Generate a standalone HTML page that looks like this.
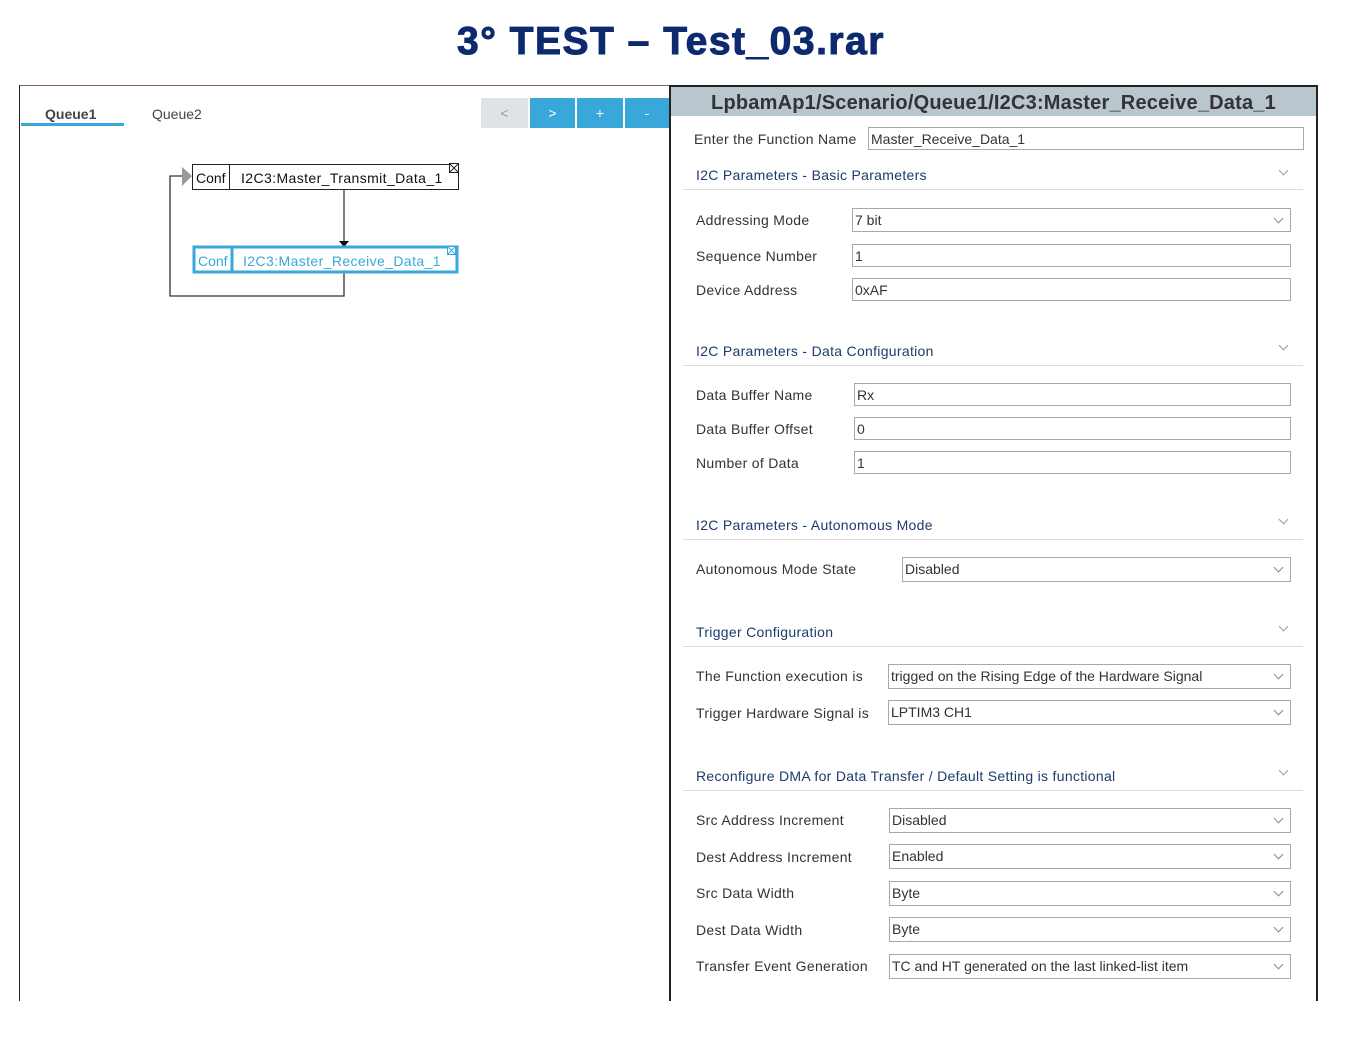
<!DOCTYPE html>
<html><head><meta charset="utf-8"><style>
body{margin:0;width:1349px;height:1039px;background:#fff;position:relative;overflow:hidden;font-family:"Liberation Sans",sans-serif;}
.a{position:absolute;}
.t{position:absolute;font-size:14px;color:#333;line-height:16px;letter-spacing:0.3px;white-space:nowrap}
.h{position:absolute;font-size:14px;color:#1d3b6b;line-height:16px;letter-spacing:0.3px;white-space:nowrap}
.f{position:absolute;border:1px solid #a8a8a8;background:#fff;font-size:14px;color:#333;line-height:22px;padding-left:2px;box-sizing:border-box;white-space:nowrap}
.s::after{content:"";position:absolute;right:8px;top:6px;width:6px;height:6px;border-right:1px solid #888;border-bottom:1px solid #888;transform:rotate(45deg)}
.c{position:absolute;width:6px;height:6px;border-right:1px solid #999;border-bottom:1px solid #999;transform:rotate(45deg)}
.l{position:absolute;left:683px;width:620px;height:1px;background:#ddd}
</style></head><body>
<div class="a" style="left:0;top:18px;width:1342px;text-align:center;font-size:39px;font-weight:bold;color:#0d2a6e;line-height:48px;letter-spacing:1.5px;-webkit-text-stroke:1px #0d2a6e">3° TEST – Test_03.rar</div>

<!-- left panel -->
<div class="a" style="left:19px;top:85px;width:650px;height:1px;background:#8a5a7a"></div>
<div class="a" style="left:19px;top:85px;width:1px;height:916px;background:#222"></div>
<div class="a" style="left:45px;top:106px;font-size:14px;font-weight:bold;color:#444">Queue1</div>
<div class="a" style="left:21px;top:123px;width:103px;height:3px;background:#3ba5d8"></div>
<div class="a" style="left:152px;top:106px;font-size:14px;color:#444">Queue2</div>
<div class="a" style="left:481px;top:98px;width:47px;height:30px;background:#dfe3e6;color:#999;text-align:center;line-height:30px;font-size:14px">&lt;</div>
<div class="a" style="left:530px;top:98px;width:45px;height:30px;background:#3aa7da;color:#fff;text-align:center;line-height:30px;font-size:14px">&gt;</div>
<div class="a" style="left:577px;top:98px;width:46px;height:30px;background:#3aa7da;color:#fff;text-align:center;line-height:30px;font-size:14px">+</div>
<div class="a" style="left:625px;top:98px;width:44px;height:30px;background:#3aa7da;color:#fff;text-align:center;line-height:30px;font-size:14px">-</div>

<svg class="a" style="left:0;top:0" width="670" height="320">
<polyline points="344,190 344,242" stroke="#000" fill="none"/>
<polygon points="339,241 349,241 344,247" fill="#000"/>
<polyline points="344,273 344,296 170,296 170,176 182,176" stroke="#333" fill="none" stroke-width="1.3"/>
<polygon points="182,167 192,176 182,186" fill="#999"/>
<rect x="192.5" y="164.5" width="266" height="25" fill="#fff" stroke="#222"/>
<line x1="229.5" y1="164" x2="229.5" y2="190" stroke="#222"/>
<rect x="194" y="247" width="263" height="25" fill="#fff" stroke="#3aa7da" stroke-width="3"/>
<line x1="232" y1="247" x2="232" y2="272" stroke="#3aa7da" stroke-width="3"/>
<rect x="449.5" y="163.5" width="9" height="9" fill="#fff" stroke="#222"/>
<path d="M450 164l8 8M458 164l-8 8" stroke="#222"/>
<rect x="447.5" y="246.5" width="8" height="8" fill="#fff" stroke="#3aa7da"/>
<path d="M448 247l7 7M455 247l-7 7" stroke="#3aa7da"/>
</svg>
<div class="a" style="left:196px;top:170px;font-size:14px;color:#111">Conf</div>
<div class="a" style="left:241px;top:170px;font-size:14px;color:#111;letter-spacing:0.4px">I2C3:Master_Transmit_Data_1</div>
<div class="a" style="left:198px;top:253px;font-size:14px;color:#3aa7da">Conf</div>
<div class="a" style="left:243px;top:253px;font-size:14px;color:#3aa7da;letter-spacing:0.4px">I2C3:Master_Receive_Data_1</div>

<!-- right panel -->
<div class="a" style="left:669px;top:85px;width:649px;height:916px;border:2px solid #222;border-bottom:none;box-sizing:border-box"></div>
<div class="a" style="left:671px;top:87px;width:645px;height:29px;background:#b9c6ce;text-align:center;font-size:20px;font-weight:bold;color:#333;line-height:32px;letter-spacing:0.2px">LpbamAp1/Scenario/Queue1/I2C3:Master_Receive_Data_1</div>

<div class="t" style="left:694px;top:131px">Enter the Function Name</div>
<div class="f" style="left:868px;top:127px;width:436px;height:23px">Master_Receive_Data_1</div>

<div class="h" style="left:696px;top:167px">I2C Parameters - Basic Parameters</div><div class="c" style="left:1280px;top:167px"></div><div class="l" style="top:189px"></div>
<div class="t" style="left:696px;top:212px">Addressing Mode</div><div class="f s" style="left:852px;top:208px;width:439px;height:24px">7 bit</div>
<div class="t" style="left:696px;top:248px">Sequence Number</div><div class="f" style="left:852px;top:244px;width:439px;height:23px">1</div>
<div class="t" style="left:696px;top:282px">Device Address</div><div class="f" style="left:852px;top:278px;width:439px;height:23px">0xAF</div>

<div class="h" style="left:696px;top:343px">I2C Parameters - Data Configuration</div><div class="c" style="left:1280px;top:342px"></div><div class="l" style="top:365px"></div>
<div class="t" style="left:696px;top:387px">Data Buffer Name</div><div class="f" style="left:854px;top:383px;width:437px;height:23px">Rx</div>
<div class="t" style="left:696px;top:421px">Data Buffer Offset</div><div class="f" style="left:854px;top:417px;width:437px;height:23px">0</div>
<div class="t" style="left:696px;top:455px">Number of Data</div><div class="f" style="left:854px;top:451px;width:437px;height:23px">1</div>

<div class="h" style="left:696px;top:517px">I2C Parameters - Autonomous Mode</div><div class="c" style="left:1280px;top:516px"></div><div class="l" style="top:539px"></div>
<div class="t" style="left:696px;top:561px">Autonomous Mode State</div><div class="f s" style="left:902px;top:557px;width:389px;height:25px">Disabled</div>

<div class="h" style="left:696px;top:624px">Trigger Configuration</div><div class="c" style="left:1280px;top:623px"></div><div class="l" style="top:646px"></div>
<div class="t" style="left:696px;top:668px">The Function execution is</div><div class="f s" style="left:888px;top:664px;width:403px;height:25px">trigged on the Rising Edge of the Hardware Signal</div>
<div class="t" style="left:696px;top:705px">Trigger Hardware Signal is</div><div class="f s" style="left:888px;top:700px;width:403px;height:25px">LPTIM3 CH1</div>

<div class="h" style="left:696px;top:768px">Reconfigure DMA for Data Transfer / Default Setting is functional</div><div class="c" style="left:1280px;top:767px"></div><div class="l" style="top:790px"></div>
<div class="t" style="left:696px;top:812px">Src Address Increment</div><div class="f s" style="left:889px;top:808px;width:402px;height:25px">Disabled</div>
<div class="t" style="left:696px;top:849px">Dest Address Increment</div><div class="f s" style="left:889px;top:844px;width:402px;height:25px">Enabled</div>
<div class="t" style="left:696px;top:885px">Src Data Width</div><div class="f s" style="left:889px;top:881px;width:402px;height:25px">Byte</div>
<div class="t" style="left:696px;top:922px">Dest Data Width</div><div class="f s" style="left:889px;top:917px;width:402px;height:25px">Byte</div>
<div class="t" style="left:696px;top:958px">Transfer Event Generation</div><div class="f s" style="left:889px;top:954px;width:402px;height:25px">TC and HT generated on the last linked-list item</div>
</body></html>
